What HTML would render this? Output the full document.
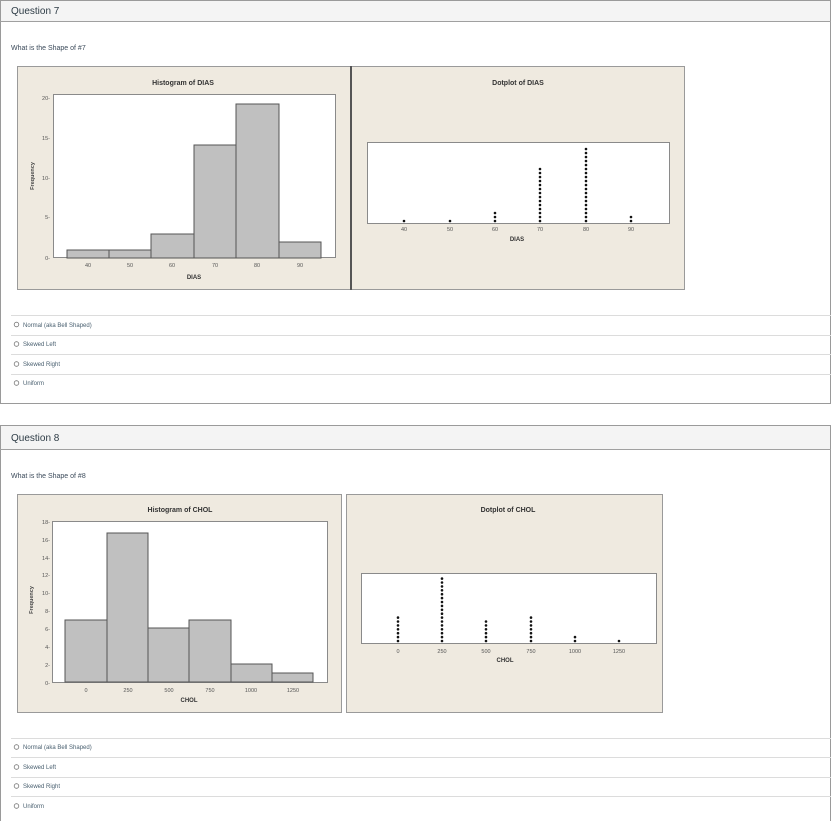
<!DOCTYPE html>
<html><head><meta charset="utf-8"><style>
body{margin:0;background:#fff;width:831px;height:821px;overflow:hidden;font-family:"Liberation Sans",sans-serif}
svg text{font-family:"Liberation Sans",sans-serif}
</style></head><body>
<svg width="831" height="821" viewBox="0 0 831 821" xmlns="http://www.w3.org/2000/svg">
<!-- Q7 box -->
<rect x="0.5" y="0.5" width="830" height="403" fill="#fff" stroke="#9a9a9a"/>
<rect x="1" y="1" width="829" height="20" fill="#f4f4f4"/>
<line x1="0" y1="21.5" x2="831" y2="21.5" stroke="#a0a0a0"/>
<text x="11" y="14" font-size="10" fill="#2d3b45">Question 7</text>
<text x="11" y="50" font-size="7" fill="#3b4a5a">What is the Shape of #7</text>

<!-- hist DIAS panel -->
<rect x="17.5" y="66.5" width="333" height="223" fill="#efeae0" stroke="#9a9a9a"/>
<rect x="53.5" y="94.5" width="282" height="163" fill="#fff" stroke="#8a8a8a"/>
<text x="183" y="85" font-size="7" font-weight="bold" text-anchor="middle" fill="#333">Histogram of DIAS</text>
<g fill="#c0c0c0" stroke="#555" stroke-width="1">
<rect x="67" y="250" width="42" height="8"/>
<rect x="109" y="250" width="42" height="8"/>
<rect x="151" y="234" width="43" height="24"/>
<rect x="194" y="145" width="42" height="113"/>
<rect x="236" y="104" width="43" height="154"/>
<rect x="279" y="242" width="42" height="16"/>
</g>
<g font-size="5.5" fill="#555" text-anchor="end">
<text x="50" y="100">20-</text><text x="50" y="140">15-</text><text x="50" y="180">10-</text><text x="50" y="219">5-</text><text x="50" y="260">0-</text>
</g>
<g font-size="5.5" fill="#555" text-anchor="middle">
<text x="88" y="267">40</text><text x="130" y="267">50</text><text x="172" y="267">60</text><text x="215" y="267">70</text><text x="257" y="267">80</text><text x="300" y="267">90</text>
</g>
<text x="194" y="279" font-size="6" font-weight="bold" text-anchor="middle" fill="#333">DIAS</text>
<text transform="translate(34,176) rotate(-90)" font-size="5.5" font-weight="bold" text-anchor="middle" fill="#444">Frequency</text>

<!-- dot DIAS panel -->
<rect x="350.5" y="66.5" width="334" height="223" fill="#efeae0" stroke="#9a9a9a"/>
<line x1="351" y1="66" x2="351" y2="290" stroke="#555" stroke-width="2"/>
<rect x="367.5" y="142.5" width="302" height="81" fill="#fff" stroke="#8a8a8a"/>
<text x="518" y="85" font-size="7" font-weight="bold" text-anchor="middle" fill="#333">Dotplot of DIAS</text>
<g stroke="#111" stroke-width="2.6" stroke-linecap="round" stroke-dasharray="0 4">
<line x1="404" y1="221" x2="404" y2="220"/>
<line x1="450" y1="221" x2="450" y2="220"/>
<line x1="495" y1="221" x2="495" y2="212"/>
<line x1="540" y1="221" x2="540" y2="168"/>
<line x1="586" y1="221" x2="586" y2="148"/>
<line x1="631" y1="221" x2="631" y2="216"/>
</g>
<g font-size="5.5" fill="#555" text-anchor="middle">
<text x="404" y="231">40</text><text x="450" y="231">50</text><text x="495" y="231">60</text><text x="540" y="231">70</text><text x="586" y="231">80</text><text x="631" y="231">90</text>
</g>
<text x="517" y="241" font-size="6" font-weight="bold" text-anchor="middle" fill="#333">DIAS</text>

<!-- Q7 options -->
<g stroke="#dcdcdc"><line x1="11" y1="315.5" x2="831" y2="315.5"/><line x1="11" y1="335.5" x2="831" y2="335.5"/><line x1="11" y1="354.5" x2="831" y2="354.5"/><line x1="11" y1="374.5" x2="831" y2="374.5"/></g>
<g fill="#fff" stroke="#777" stroke-width="0.8"><circle cx="16.5" cy="324.5" r="2.3"/><circle cx="16.5" cy="344" r="2.3"/><circle cx="16.5" cy="364" r="2.3"/><circle cx="16.5" cy="383" r="2.3"/></g>
<g font-size="6" fill="#4a6070"><text x="23" y="327">Normal (aka Bell Shaped)</text><text x="23" y="346">Skewed Left</text><text x="23" y="366">Skewed Right</text><text x="23" y="385">Uniform</text></g>

<!-- Q8 box -->
<rect x="0.5" y="425.5" width="830" height="400" fill="#fff" stroke="#9a9a9a"/>
<rect x="1" y="426" width="829" height="23" fill="#f4f4f4"/>
<line x1="0" y1="449.5" x2="831" y2="449.5" stroke="#a0a0a0"/>
<text x="11" y="441" font-size="10" fill="#2d3b45">Question 8</text>
<text x="11" y="478" font-size="7" fill="#3b4a5a">What is the Shape of #8</text>

<!-- hist CHOL -->
<rect x="17.5" y="494.5" width="324" height="218" fill="#efeae0" stroke="#9a9a9a"/>
<rect x="52.5" y="521.5" width="275" height="161" fill="#fff" stroke="#8a8a8a"/>
<text x="180" y="512" font-size="7" font-weight="bold" text-anchor="middle" fill="#333">Histogram of CHOL</text>
<g fill="#c0c0c0" stroke="#555" stroke-width="1">
<rect x="65" y="620" width="42" height="62"/>
<rect x="107" y="533" width="41" height="149"/>
<rect x="148" y="628" width="41" height="54"/>
<rect x="189" y="620" width="42" height="62"/>
<rect x="231" y="664" width="41" height="18"/>
<rect x="272" y="673" width="41" height="9"/>
</g>
<g font-size="5.5" fill="#555" text-anchor="end">
<text x="50" y="524">18-</text><text x="50" y="542">16-</text><text x="50" y="560">14-</text><text x="50" y="577">12-</text><text x="50" y="595">10-</text><text x="50" y="613">8-</text><text x="50" y="631">6-</text><text x="50" y="649">4-</text><text x="50" y="667">2-</text><text x="50" y="685">0-</text>
</g>
<g font-size="5.5" fill="#555" text-anchor="middle">
<text x="86" y="692">0</text><text x="128" y="692">250</text><text x="169" y="692">500</text><text x="210" y="692">750</text><text x="251" y="692">1000</text><text x="293" y="692">1250</text>
</g>
<text x="189" y="702" font-size="6" font-weight="bold" text-anchor="middle" fill="#333">CHOL</text>
<text transform="translate(33,600) rotate(-90)" font-size="5.5" font-weight="bold" text-anchor="middle" fill="#444">Frequency</text>

<!-- dot CHOL -->
<rect x="346.5" y="494.5" width="316" height="218" fill="#efeae0" stroke="#9a9a9a"/>
<rect x="361.5" y="573.5" width="295" height="70" fill="#fff" stroke="#8a8a8a"/>
<text x="508" y="512" font-size="7" font-weight="bold" text-anchor="middle" fill="#333">Dotplot of CHOL</text>
<g stroke="#111" stroke-width="2.6" stroke-linecap="round" stroke-dasharray="0 3.9">
<line x1="398" y1="641" x2="398" y2="617"/>
<line x1="442" y1="641" x2="442" y2="578"/>
<line x1="486" y1="641" x2="486" y2="621"/>
<line x1="531" y1="641" x2="531" y2="617"/>
<line x1="575" y1="641" x2="575" y2="636"/>
<line x1="619" y1="641" x2="619" y2="640"/>
</g>
<g font-size="5.5" fill="#555" text-anchor="middle">
<text x="398" y="653">0</text><text x="442" y="653">250</text><text x="486" y="653">500</text><text x="531" y="653">750</text><text x="575" y="653">1000</text><text x="619" y="653">1250</text>
</g>
<text x="505" y="662" font-size="6" font-weight="bold" text-anchor="middle" fill="#333">CHOL</text>

<!-- Q8 options -->
<g stroke="#dcdcdc"><line x1="11" y1="738.5" x2="831" y2="738.5"/><line x1="11" y1="757.5" x2="831" y2="757.5"/><line x1="11" y1="777.5" x2="831" y2="777.5"/><line x1="11" y1="796.5" x2="831" y2="796.5"/></g>
<g fill="#fff" stroke="#777" stroke-width="0.8"><circle cx="16.5" cy="747" r="2.3"/><circle cx="16.5" cy="767" r="2.3"/><circle cx="16.5" cy="786" r="2.3"/><circle cx="16.5" cy="806" r="2.3"/></g>
<g font-size="6" fill="#4a6070"><text x="23" y="749">Normal (aka Bell Shaped)</text><text x="23" y="769">Skewed Left</text><text x="23" y="788">Skewed Right</text><text x="23" y="808">Uniform</text></g>
</svg>
</body></html>
